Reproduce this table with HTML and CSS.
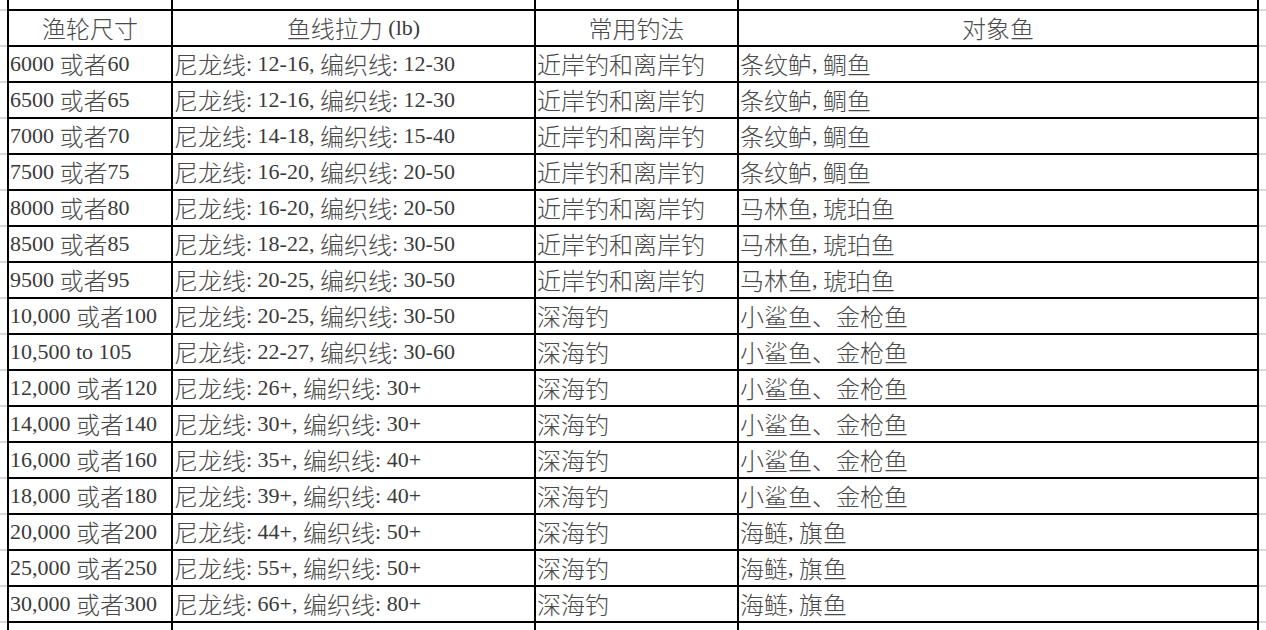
FILE: index.html
```html
<!DOCTYPE html>
<html lang="zh">
<head>
<meta charset="utf-8">
<title>渔轮尺寸</title>
<link rel="stylesheet" href="styles.css">
</head>
<body>
<div class="sheet">
  <div class="c stub"></div><div class="c stub"></div><div class="c stub"></div><div class="c stub"></div>

  <div class="c h"><span class="z">渔轮尺寸</span></div>
  <div class="c h"><span class="z">鱼线拉力</span>&nbsp;(lb)</div>
  <div class="c h"><span class="z">常用钓法</span></div>
  <div class="c h"><span class="z">对象鱼</span></div>

  <div class="c">6000 <span class="z">或者</span>60</div>
  <div class="c"><span class="z">尼龙线</span>: 12-16, <span class="z">编织线</span>: 12-30</div>
  <div class="c"><span class="z">近岸钓和离岸钓</span></div>
  <div class="c"><span class="z">条纹鲈</span>, <span class="z">鲷鱼</span></div>

  <div class="c">6500 <span class="z">或者</span>65</div>
  <div class="c"><span class="z">尼龙线</span>: 12-16, <span class="z">编织线</span>: 12-30</div>
  <div class="c"><span class="z">近岸钓和离岸钓</span></div>
  <div class="c"><span class="z">条纹鲈</span>, <span class="z">鲷鱼</span></div>

  <div class="c">7000 <span class="z">或者</span>70</div>
  <div class="c"><span class="z">尼龙线</span>: 14-18, <span class="z">编织线</span>: 15-40</div>
  <div class="c"><span class="z">近岸钓和离岸钓</span></div>
  <div class="c"><span class="z">条纹鲈</span>, <span class="z">鲷鱼</span></div>

  <div class="c">7500 <span class="z">或者</span>75</div>
  <div class="c"><span class="z">尼龙线</span>: 16-20, <span class="z">编织线</span>: 20-50</div>
  <div class="c"><span class="z">近岸钓和离岸钓</span></div>
  <div class="c"><span class="z">条纹鲈</span>, <span class="z">鲷鱼</span></div>

  <div class="c">8000 <span class="z">或者</span>80</div>
  <div class="c"><span class="z">尼龙线</span>: 16-20, <span class="z">编织线</span>: 20-50</div>
  <div class="c"><span class="z">近岸钓和离岸钓</span></div>
  <div class="c"><span class="z">马林鱼</span>, <span class="z">琥珀鱼</span></div>

  <div class="c">8500 <span class="z">或者</span>85</div>
  <div class="c"><span class="z">尼龙线</span>: 18-22, <span class="z">编织线</span>: 30-50</div>
  <div class="c"><span class="z">近岸钓和离岸钓</span></div>
  <div class="c"><span class="z">马林鱼</span>, <span class="z">琥珀鱼</span></div>

  <div class="c">9500 <span class="z">或者</span>95</div>
  <div class="c"><span class="z">尼龙线</span>: 20-25, <span class="z">编织线</span>: 30-50</div>
  <div class="c"><span class="z">近岸钓和离岸钓</span></div>
  <div class="c"><span class="z">马林鱼</span>, <span class="z">琥珀鱼</span></div>

  <div class="c">10,000 <span class="z">或者</span>100</div>
  <div class="c"><span class="z">尼龙线</span>: 20-25, <span class="z">编织线</span>: 30-50</div>
  <div class="c"><span class="z">深海钓</span></div>
  <div class="c"><span class="z">小鲨鱼、金枪鱼</span></div>

  <div class="c">10,500 to 105</div>
  <div class="c"><span class="z">尼龙线</span>: 22-27, <span class="z">编织线</span>: 30-60</div>
  <div class="c"><span class="z">深海钓</span></div>
  <div class="c"><span class="z">小鲨鱼、金枪鱼</span></div>

  <div class="c">12,000 <span class="z">或者</span>120</div>
  <div class="c"><span class="z">尼龙线</span>: 26+, <span class="z">编织线</span>: 30+</div>
  <div class="c"><span class="z">深海钓</span></div>
  <div class="c"><span class="z">小鲨鱼、金枪鱼</span></div>

  <div class="c">14,000 <span class="z">或者</span>140</div>
  <div class="c"><span class="z">尼龙线</span>: 30+, <span class="z">编织线</span>: 30+</div>
  <div class="c"><span class="z">深海钓</span></div>
  <div class="c"><span class="z">小鲨鱼、金枪鱼</span></div>

  <div class="c">16,000 <span class="z">或者</span>160</div>
  <div class="c"><span class="z">尼龙线</span>: 35+, <span class="z">编织线</span>: 40+</div>
  <div class="c"><span class="z">深海钓</span></div>
  <div class="c"><span class="z">小鲨鱼、金枪鱼</span></div>

  <div class="c">18,000 <span class="z">或者</span>180</div>
  <div class="c"><span class="z">尼龙线</span>: 39+, <span class="z">编织线</span>: 40+</div>
  <div class="c"><span class="z">深海钓</span></div>
  <div class="c"><span class="z">小鲨鱼、金枪鱼</span></div>

  <div class="c">20,000 <span class="z">或者</span>200</div>
  <div class="c"><span class="z">尼龙线</span>: 44+, <span class="z">编织线</span>: 50+</div>
  <div class="c"><span class="z">深海钓</span></div>
  <div class="c"><span class="z">海鲢</span>, <span class="z">旗鱼</span></div>

  <div class="c">25,000 <span class="z">或者</span>250</div>
  <div class="c"><span class="z">尼龙线</span>: 55+, <span class="z">编织线</span>: 50+</div>
  <div class="c"><span class="z">深海钓</span></div>
  <div class="c"><span class="z">海鲢</span>, <span class="z">旗鱼</span></div>

  <div class="c">30,000 <span class="z">或者</span>300</div>
  <div class="c"><span class="z">尼龙线</span>: 66+, <span class="z">编织线</span>: 80+</div>
  <div class="c"><span class="z">深海钓</span></div>
  <div class="c"><span class="z">海鲢</span>, <span class="z">旗鱼</span></div>

  <div class="c"></div><div class="c"></div><div class="c"></div><div class="c"></div>
</div>
</body>
</html>
```

FILE: styles.css
```css
html, body {
  margin: 0;
  padding: 0;
  height: 100%;
  overflow: hidden;
}

body {
  background-color: #fff;
  background-image: repeating-linear-gradient(
    to bottom,
    transparent 0px,
    transparent 9px,
    #d9d9d9 9px,
    #d9d9d9 11px,
    transparent 11px,
    transparent 36px
  );
  font-family: "Liberation Serif", "Noto Sans CJK SC", serif;
  font-size: 22px;
  color: #3a3a3a;
}

.sheet {
  display: grid;
  grid-template-columns: 164px 363px 203px 520px;
  width: max-content;
  margin-left: 7px;
  border-left: 2px solid #000;
  background: #fff;
}

.c {
  box-sizing: border-box;
  height: 36px;
  border-right: 2px solid #000;
  border-bottom: 2px solid #000;
  display: flex;
  align-items: center;
  padding-left: 1px;
  white-space: pre;
  overflow: hidden;
  line-height: 1;
}

.stub {
  height: 11px;
}

.h {
  justify-content: center;
  padding-left: 0;
}

.z {
  font-family: "Noto Sans CJK SC", sans-serif;
  font-size: 24px;
  font-weight: 300;
  color: #4a4a4a;
}
```
